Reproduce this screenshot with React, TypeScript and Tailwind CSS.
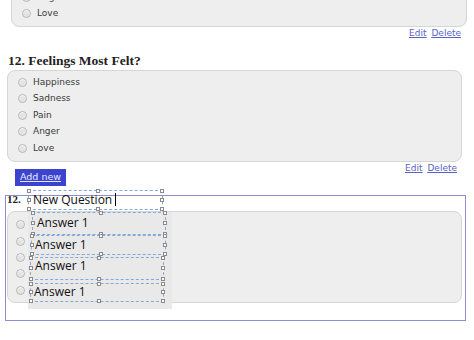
import type { ReactNode } from 'react';

const feelings = ['Happiness', 'Sadness', 'Pain', 'Anger', 'Love'];

function Radio(): JSX.Element {
  return (
    <span className="block h-[9px] w-[9px] shrink-0 rounded-full border border-[#b8b8b8] bg-[#e4e4e4] shadow-[inset_0_1px_1px_rgba(255,255,255,0.9)]" />
  );
}

function OptionRow({ label }: { label: string }): JSX.Element {
  return (
    <div className="flex h-[16.5px] items-center gap-[6px]">
      <Radio />
      <span>{label}</span>
    </div>
  );
}

function EditLinks({ right }: { right: string }): JSX.Element {
  return (
    <div className={`flex justify-end gap-[5px] text-[9px] leading-[11px] text-[#5a62c8] underline ${right}`}>
      <a href="#">Edit</a>
      <a href="#">Delete</a>
    </div>
  );
}

function Handle({ pos }: { pos: string }): JSX.Element {
  return <span className={`absolute h-[4px] w-[4px] border border-[#8a8a8a] bg-white ${pos}`} />;
}

// selection frame drawn by the inline editor around each editable field
function Selected({ className, children }: { className: string; children: ReactNode }): JSX.Element {
  return (
    <div className={`relative flex items-center border border-dashed border-[#86a8d8] ${className}`}>
      {children}
      <Handle pos="-left-[2px] -top-[2px]" />
      <Handle pos="left-1/2 -top-[2px]" />
      <Handle pos="-right-[2px] -top-[2px]" />
      <Handle pos="-left-[2px] top-1/2 -translate-y-1/2" />
      <Handle pos="-right-[2px] top-1/2 -translate-y-1/2" />
      <Handle pos="-left-[2px] -bottom-[2px]" />
      <Handle pos="left-1/2 -bottom-[2px]" />
      <Handle pos="-right-[2px] -bottom-[2px]" />
    </div>
  );
}

export default function App(): JSX.Element {
  return (
    <div className="h-[340px] w-[474px] overflow-hidden bg-white font-['DejaVu_Sans',sans-serif] text-[9px] text-[#3a3a3a]">
      <div className="-mt-[15px] ml-[11px] w-[456px] rounded-[8px] border border-[#d6d6d6] bg-[#eeeeee] pb-[4px] pl-[10px] pt-[3px]">
        <OptionRow label="Anger" />
        <OptionRow label="Love" />
      </div>
      <EditLinks right="pr-[13px] mt-[1px]" />

      <h3 className="ml-[8px] mt-[14px] font-['Liberation_Serif',serif] text-[13.5px] font-bold leading-[16px] text-[#222]">
        12. Feelings Most Felt?
      </h3>
      <div className="ml-[7px] mt-px w-[455px] rounded-[8px] border border-[#d6d6d6] bg-[#eeeeee] pb-[4px] pl-[10px] pt-[3px]">
        {feelings.map((f) => (
          <OptionRow key={f} label={f} />
        ))}
      </div>

      <div className="flex h-[24px] items-start justify-between">
        <button
          type="button"
          className="ml-[15px] mt-[7px] flex h-[17px] w-[51px] items-center justify-center bg-[#3c44cf] text-[9.5px] text-[#e6e8ff] underline"
        >
          Add new
        </button>
        <EditLinks right="pr-[17px] mt-[1px]" />
      </div>

      <div className="ml-[5px] mt-[9px] h-[126px] w-[461px] border border-[#8b8fd2]">
        <div className="-mt-[6px] flex h-[20px] items-center">
          <span className="w-[22px] pl-[1px] font-['Liberation_Serif',serif] text-[11px] font-bold text-[#222]">12.</span>
          <Selected className="h-[20px] w-[135px] pl-[4px]">
            <span className="font-['Open_Sans',sans-serif] text-[12px] text-[#111]">New Question</span>
            <span className="ml-[3px] h-[13px] w-px bg-black" />
          </Selected>
        </div>

        <div className="ml-px mt-px flex h-[92px] w-[455px] items-start rounded-[8px] border border-[#d6d6d6] bg-[#eeeeee] pl-[8px]">
          <div className="flex w-[9px] flex-col pt-[5px]">
            {[0, 1, 2, 3, 4].map((i) => (
              <div key={i} className="flex h-[16.4px] items-center">
                <Radio />
              </div>
            ))}
          </div>
          <div className="ml-[3px] flex h-[97px] w-[144px] shrink-0 flex-col bg-[#e9e9e9] font-['Open_Sans',sans-serif] text-[12px] text-[#111]">
            <Selected className="ml-[4px] h-[23px] w-[134px] pl-[4px]">Answer 1</Selected>
            <Selected className="ml-[3px] h-[20px] w-[135px] pl-[3px]">Answer 1</Selected>
            <Selected className="ml-[2px] mt-[2px] h-[23px] w-[134px] pb-[4px] pl-[4px]">Answer 1</Selected>
            <Selected className="ml-[2px] mt-[3px] h-[19px] w-[134px] pl-[3px]">Answer 1</Selected>
          </div>
        </div>
      </div>
    </div>
  );
}
